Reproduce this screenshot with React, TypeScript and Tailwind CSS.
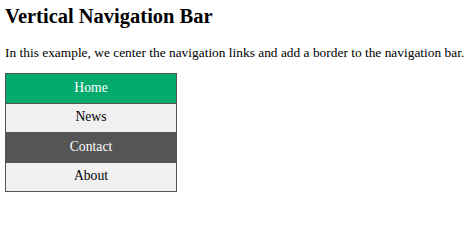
const links = [
  { label: "Home", className: "bg-[#04AA6D] text-white" },
  { label: "News", className: "bg-[#f1f1f1] text-black" },
  { label: "Contact", className: "bg-[#555555] text-white" },
  { label: "About", className: "bg-[#f1f1f1] text-black" },
];

export default function App() {
  return (
    <div className="w-[474px] h-[200px] bg-white px-[5px] pt-[4px] text-black font-['Liberation_Serif',serif] overflow-hidden">
      <h2 className="text-[20.5px] leading-[24px] font-bold">Vertical Navigation Bar</h2>
      <p className="mt-[17px] whitespace-nowrap text-[13.4px] leading-[16px]">
        In this example, we center the navigation links and add a border to the navigation bar.
      </p>
      <ul className="mt-[12px] w-[172px] border border-[#555555]">
        {links.map((l, i) => (
          <li
            key={l.label}
            className={`${i < links.length - 1 ? "border-b border-[#555555]" : ""}`}
          >
            <a className={`flex h-[28.5px] items-center justify-center text-[13.7px] ${l.className}`}>
              {l.label}
            </a>
          </li>
        ))}
      </ul>
    </div>
  );
}
